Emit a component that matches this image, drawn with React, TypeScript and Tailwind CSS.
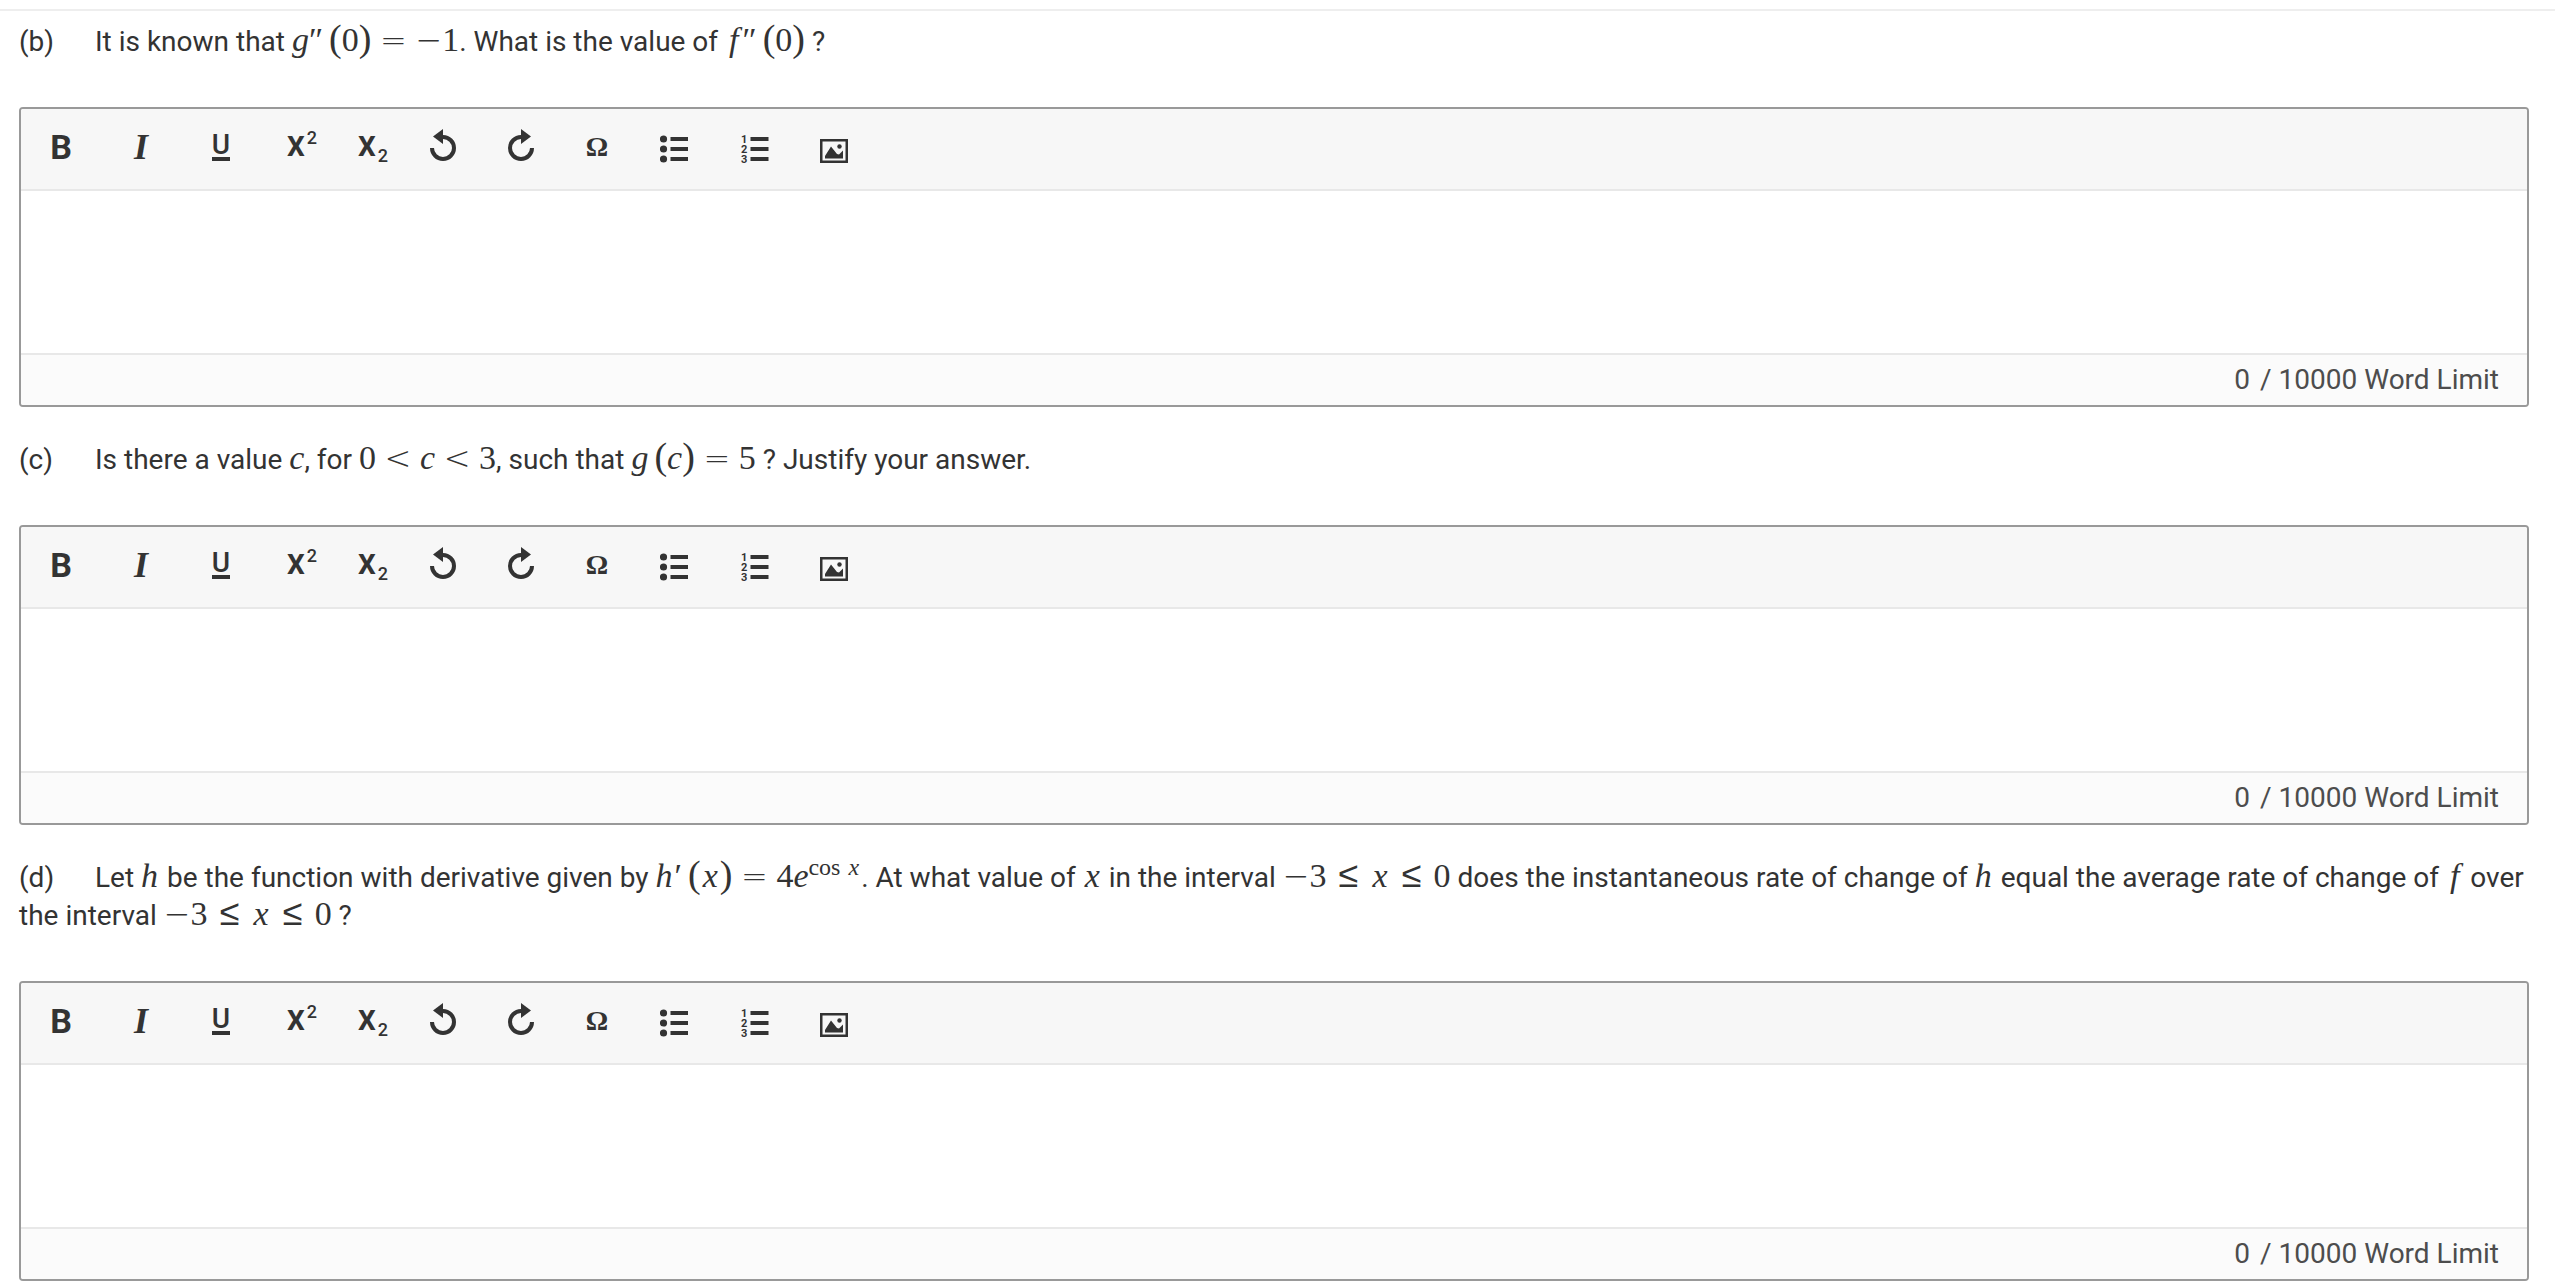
import type { ReactNode } from "react";
import { clsx } from "clsx";

/* ---------- Math ---------- */

function MathText({ children }: { children: ReactNode }) {
  return (
    <span className="whitespace-nowrap font-['Liberation_Serif',serif] text-[34px] leading-[0px]">
      {children}
    </span>
  );
}

function Var({ name }: { name: string }) {
  return (
    <i
      className={clsx(
        name === "f" && "px-1",
        name === "x" && "px-0.5",
        name === "h" && "pr-0.5",
      )}
    >
      {name}
    </i>
  );
}

// Relation sign such as = or <, spaced on both sides
function Rel({ children }: { children: ReactNode }) {
  return (
    <span
      className={clsx(
        "mx-1.5 inline-block w-8 text-center font-['DejaVu_Sans',sans-serif] font-extralight leading-[0px]",
        children === "≤" ? "text-[36px]" : "text-[32px]",
      )}
    >
      {children}
    </span>
  );
}

function Minus() {
  return (
    <span className="font-['DejaVu_Sans',sans-serif] text-[32px] font-extralight leading-[0px]">
      −
    </span>
  );
}

// Argument in parentheses
function Arg({ children }: { children: ReactNode }) {
  return (
    <span className="ml-1.5">
      <span className="text-[38px] leading-[0px]">(</span>
      {children}
      <span className="text-[38px] leading-[0px]">)</span>
    </span>
  );
}

/* ---------- Icons ---------- */

function TurnIcon({ flip }: { flip?: boolean }) {
  return (
    <svg
      viewBox="0 0 26 32"
      className={clsx("mb-1 h-8 w-[26px]", flip && "-scale-x-100")}
      aria-hidden="true"
    >
      <path
        d="M13 8A11 11 0 1 1 2 19"
        fill="none"
        stroke="currentColor"
        strokeWidth="4"
      />
      <path d="M13 0v15L3 7.5z" fill="currentColor" />
    </svg>
  );
}

function BulletIcon() {
  return (
    <svg viewBox="0 0 28 28" className="mt-1 size-7" fill="currentColor" aria-hidden="true">
      {[4, 14, 24].map((y) => (
        <g key={y}>
          <circle cx="3.5" cy={y} r="3.6" />
          <rect x="10.5" y={y - 2} width="17.5" height="4" />
        </g>
      ))}
    </svg>
  );
}

function NumberIcon() {
  return (
    <svg
      viewBox="0 0 28 28"
      className="mt-1 size-7 overflow-visible"
      fill="currentColor"
      aria-hidden="true"
    >
      {[4, 14, 24].map((y, i) => (
        <g key={y}>
          <text
            x="0"
            y={y + 4}
            className="font-['Roboto',sans-serif] text-[11px] font-bold"
          >
            {i + 1}
          </text>
          <rect x="9.5" y={y - 2} width="18" height="4" />
        </g>
      ))}
    </svg>
  );
}

function PictureIcon() {
  return (
    <svg viewBox="0 0 28 24" className="mt-2 h-6 w-7" fill="currentColor" aria-hidden="true">
      <rect
        x="1.25"
        y="1.25"
        width="25.5"
        height="21.5"
        fill="none"
        stroke="currentColor"
        strokeWidth="2.5"
      />
      <path d="M5 19.5V17l6-9.5 6 7.5 2 .5 4-4v8z" />
      <circle cx="19.5" cy="7.5" r="2.2" />
    </svg>
  );
}

/* ---------- Editor ---------- */

const TOOLS = [
  {
    label: "Bold",
    width: "w-20",
    icon: <span className="text-[34px] font-bold">B</span>,
  },
  {
    label: "Italic",
    width: "w-20",
    icon: (
      <span className="font-['Liberation_Serif',serif] text-[36px] font-bold italic">
        I
      </span>
    ),
  },
  {
    label: "Underline",
    width: "w-20",
    icon: (
      <span className="border-b-4 border-[#333] text-[28px] font-medium leading-6">
        U
      </span>
    ),
  },
  {
    label: "Superscript",
    width: "w-[82px]",
    icon: (
      <span className="text-[28px] font-bold">
        X<sup className="-top-3 ml-0.5 text-[18px] font-medium">2</sup>
      </span>
    ),
  },
  {
    label: "Subscript",
    width: "w-[60px]",
    icon: (
      <span className="text-[28px] font-bold">
        X<sub className="-bottom-1.5 ml-0.5 text-[18px] font-medium">2</sub>
      </span>
    ),
  },
  { label: "Undo", width: "w-20", icon: <TurnIcon /> },
  { label: "Redo", width: "w-[76px]", icon: <TurnIcon flip /> },
  {
    label: "Special characters",
    width: "w-[76px]",
    icon: (
      <span className="font-['Liberation_Serif',serif] text-[28px] font-bold">
        Ω
      </span>
    ),
  },
  { label: "Bulleted list", width: "w-[78px]", icon: <BulletIcon /> },
  { label: "Numbered list", width: "w-[84px]", icon: <NumberIcon /> },
  { label: "Insert image", width: "w-[74px]", icon: <PictureIcon /> },
];

function Editor({ label }: { label: string }) {
  return (
    <div className="overflow-hidden rounded border-2 border-[#999]">
      <div
        role="toolbar"
        aria-label={`Formatting for ${label}`}
        className="flex h-[82px] border-b-2 border-[#e8e8e8] bg-[#f7f7f7]"
      >
        {TOOLS.map((tool) => (
          <button
            key={tool.label}
            type="button"
            aria-label={tool.label}
            className={clsx(
              "flex items-center justify-center pb-1 leading-none",
              tool.width,
            )}
          >
            {tool.icon}
          </button>
        ))}
      </div>
      <textarea
        aria-label={label}
        className="block h-[162px] w-full resize-none bg-white px-7 py-4 outline-none"
      />
      <div className="flex h-[52px] items-center justify-end gap-2.5 border-t-2 border-[#e8e8e8] bg-[#fbfbfb] pr-7 text-[#4d4d4d]">
        <span>0</span>
        <span>/ 10000 Word Limit</span>
      </div>
    </div>
  );
}

function Part({ name, children }: { name: string; children: ReactNode }) {
  return (
    <section>
      <p className="mb-[46px]">
        <span className="inline-block w-[76px]">({name})</span>
        {children}
      </p>
      <Editor label={`Answer for part ${name}`} />
    </section>
  );
}

export default function App() {
  return (
    <div className="bg-white pt-[9px] font-['Roboto',sans-serif] text-[28px] leading-[38px] text-[#333]">
      <main className="border-t-2 border-[#eee]">
        <div className="flex flex-col gap-[34px] pl-[19px] pr-[26px] pt-3">
          <Part name="b">
            It is known that{" "}
            <MathText>
              <Var name="g" />″<Arg>0</Arg>
              <Rel>=</Rel>
              <Minus />1
            </MathText>
            . What is the value of{" "}
            <MathText>
              <Var name="f" />″<Arg>0</Arg>
            </MathText>{" "}
            ?
          </Part>

          <Part name="c">
            Is there a value{" "}
            <MathText>
              <Var name="c" />
            </MathText>
            , for{" "}
            <MathText>
              0<Rel>&lt;</Rel>
              <Var name="c" />
              <Rel>&lt;</Rel>3
            </MathText>
            , such that{" "}
            <MathText>
              <Var name="g" />
              <Arg>
                <Var name="c" />
              </Arg>
              <Rel>=</Rel>5
            </MathText>{" "}
            ? Justify your answer.
          </Part>

          <Part name="d">
            Let{" "}
            <MathText>
              <Var name="h" />
            </MathText>{" "}
            be the function with derivative given by{" "}
            <MathText>
              <Var name="h" />′
              <Arg>
                <Var name="x" />
              </Arg>
              <Rel>=</Rel>4<Var name="e" />
              <sup className="text-[24px]">
                cos <Var name="x" />
              </sup>
            </MathText>
            . At what value of{" "}
            <MathText>
              <Var name="x" />
            </MathText>{" "}
            in the interval{" "}
            <MathText>
              <Minus />3<Rel>≤</Rel>
              <Var name="x" />
              <Rel>≤</Rel>0
            </MathText>{" "}
            does the instantaneous rate of change of{" "}
            <MathText>
              <Var name="h" />
            </MathText>{" "}
            equal the average rate of change of{" "}
            <MathText>
              <Var name="f" />
            </MathText>{" "}
            over{" "}
            <span>
              the interval{" "}
              <MathText>
                <Minus />3<Rel>≤</Rel>
                <Var name="x" />
                <Rel>≤</Rel>0
              </MathText>{" "}
              ?
            </span>
          </Part>
        </div>
      </main>
    </div>
  );
}
